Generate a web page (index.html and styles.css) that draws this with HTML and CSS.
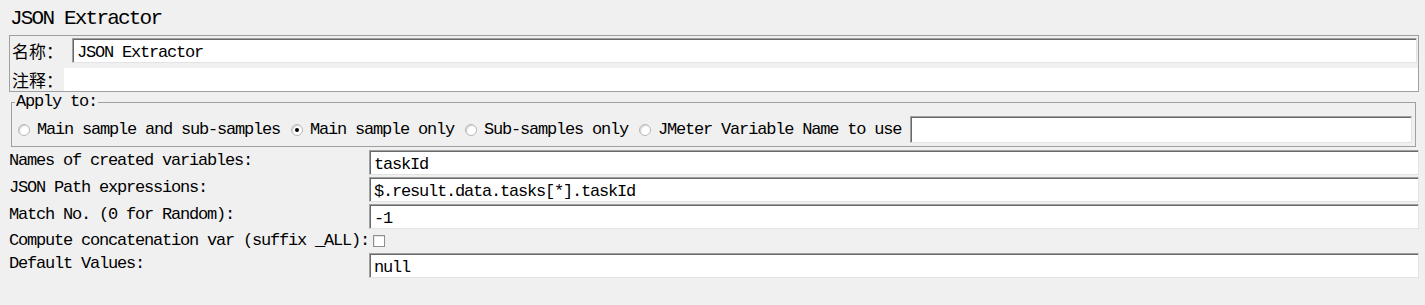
FILE: index.html
```html
<!DOCTYPE html>
<html lang="zh-CN">
<head>
    <meta charset="UTF-8">
    <title>JSON Extractor</title>
    <link rel="stylesheet" href="styles.css">
</head>
<body>
    <div class="title">JSON Extractor</div>

    <div class="name-panel">
        <div class="name-row">
            <span class="cjk-label">名称：</span>
            <div class="field name-field">JSON Extractor</div>
        </div>
        <div class="comment-row">
            <span class="cjk-label">注释：</span>
            <div class="comment-field"></div>
        </div>
    </div>

    <fieldset class="apply-to">
        <legend>Apply to:</legend>
        <div class="radio-row">
            <span class="radio"></span><span class="radio-text">Main sample and sub-samples</span>
            <span class="radio checked"></span><span class="radio-text">Main sample only</span>
            <span class="radio"></span><span class="radio-text">Sub-samples only</span>
            <span class="radio"></span><span class="radio-text">JMeter Variable Name to use</span>
            <div class="field var-field"></div>
        </div>
    </fieldset>

    <div class="settings">
        <div class="label">Names of created variables:</div>
        <div class="field">taskId</div>

        <div class="label">JSON Path expressions:</div>
        <div class="field">$.result.data.tasks[*].taskId</div>

        <div class="label">Match No. (0 for Random):</div>
        <div class="field">-1</div>

        <div class="label check-label">Compute concatenation var (suffix _ALL):</div>
        <div class="check-cell"><span class="checkbox"></span></div>

        <div class="label">Default Values:</div>
        <div class="field">null</div>
    </div>
</body>
</html>
```

FILE: styles.css
```css
body {
    margin: 0;
    background-color: #f0f0f0;
    color: #000000;
    font-family: 'Liberation Mono', 'Noto Sans CJK SC', monospace;
    font-size: 17px;
    letter-spacing: -1.2px;
}

.title {
    height: 35px;
    padding-left: 10px;
    font-size: 21px;
    letter-spacing: -1.8px;
    line-height: 38px;
}

.name-panel {
    margin: 0 6px 0 9px;
    border: 1px solid #a0a0a0;
}

.name-row {
    display: flex;
    align-items: center;
    padding-top: 2px;
}

.cjk-label {
    width: 60px;
    padding-left: 2px;
    font-family: 'Noto Sans CJK SC', sans-serif;
    font-size: 17px;
    letter-spacing: 0;
    flex-shrink: 0;
}

.comment-row {
    display: flex;
    align-items: center;
    margin-top: 5px;
    height: 23px;
}

.comment-row .cjk-label {
    width: 52px;
}

.comment-field {
    flex: 1;
    height: 23px;
    background-color: #ffffff;
}

.field {
    box-sizing: border-box;
    height: 25px;
    background-color: #ffffff;
    border-top: 1px solid #a0a0a0;
    border-left: 1px solid #a0a0a0;
    border-right: 1px solid #e3e3e3;
    border-bottom: 1px solid #e3e3e3;
    box-shadow: inset 1px 1px 0 #696969;
    padding-left: 4px;
    line-height: 27px;
    white-space: nowrap;
}

.name-field {
    flex: 1;
    margin-right: 1px;
}

.apply-to {
    margin: 1px 9px 0 11px;
    padding: 5px 3px 3px 4px;
    border: 1px solid #a0a0a0;
}

.apply-to legend {
    padding: 0 1px;
    margin-left: -1px;
    line-height: 18px;
}

.radio-row {
    display: flex;
    align-items: center;
}

.radio {
    box-sizing: border-box;
    width: 12px;
    height: 12px;
    border: 1px solid #b8b8b8;
    border-radius: 50%;
    background-color: #ffffff;
    box-shadow: inset 1px 1px 1px #cfcfcf;
    margin: 0 7px 0 2px;
    position: relative;
    flex-shrink: 0;
}

.radio.checked::after {
    content: '';
    position: absolute;
    left: 3px;
    top: 3px;
    width: 4px;
    height: 4px;
    border-radius: 50%;
    background-color: #000000;
}

.radio-text {
    margin-right: 9px;
}

.var-field {
    flex: 1;
    height: 27px;
    margin-left: 0;
}

.settings {
    display: grid;
    grid-template-columns: 360px 1fr;
    row-gap: 2px;
    margin: 3px 6px 0 9px;
}

.label {
    line-height: 22px;
    white-space: nowrap;
}

.check-label {
    line-height: 20px;
}

.check-cell {
    height: 19px;
    display: flex;
    align-items: center;
    padding-left: 4px;
}

.checkbox {
    box-sizing: border-box;
    width: 12px;
    height: 12px;
    border: 1px solid #8f8f8f;
    background-color: #ffffff;
    box-shadow: inset 1px 1px 0 #e6e6e6;
}
```
